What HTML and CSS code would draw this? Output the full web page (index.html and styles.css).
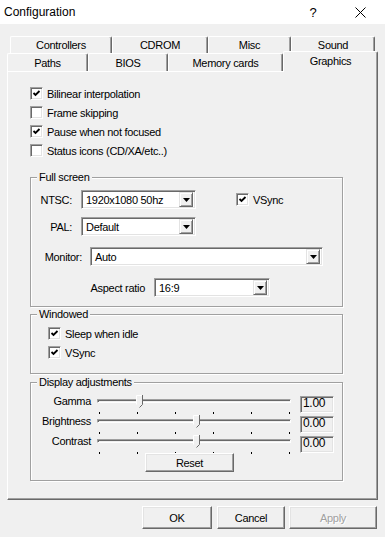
FILE: index.html
```html
<!DOCTYPE html>
<html lang="en">
<head>
    <meta charset="UTF-8">
    <meta name="viewport" content="width=device-width, initial-scale=1.0">
    <title>Configuration</title>
    <link rel="stylesheet" href="styles.css">
</head>
<body>
    <div class="titlebar">
        <span class="title">Configuration</span>
        <span class="help">?</span>
        <span class="close">
            <svg width="11" height="11" viewBox="0 0 11 11"><path d="M0.5 0.5L10.5 10.5M10.5 0.5L0.5 10.5" stroke="#000" stroke-width="1"/></svg>
        </span>
    </div>

    <div class="tabs">
        <div class="tab-row tab-row-back">
            <div class="tab tab-controllers">Controllers</div>
            <div class="tab tab-cdrom">CDROM</div>
            <div class="tab tab-misc">Misc</div>
            <div class="tab tab-sound">Sound</div>
        </div>
        <div class="tab-row tab-row-front">
            <div class="tab tab-paths">Paths</div>
            <div class="tab tab-bios">BIOS</div>
            <div class="tab tab-memcards">Memory cards</div>
            <div class="tab tab-graphics selected">Graphics</div>
        </div>
    </div>

    <div class="panel">
        <div class="checks">
            <label class="check"><span class="box"><svg width="9" height="9" viewBox="0 0 9 9"><polyline points="1.5,4 3.5,6 7.5,2" fill="none" stroke="#000" stroke-width="1.8"/></svg></span>Bilinear interpolation</label>
            <label class="check"><span class="box"></span>Frame skipping</label>
            <label class="check"><span class="box"><svg width="9" height="9" viewBox="0 0 9 9"><polyline points="1.5,4 3.5,6 7.5,2" fill="none" stroke="#000" stroke-width="1.8"/></svg></span>Pause when not focused</label>
            <label class="check"><span class="box"></span>Status icons (CD/XA/etc..)</label>
        </div>

        <div class="group group-fullscreen">
            <span class="group-title">Full screen</span>
            <div class="fs-row">
                <span class="fs-label label-short">NTSC:</span>
                <div class="combo combo-mode">
                    <span class="combo-text">1920x1080 50hz</span>
                    <span class="combo-btn"><svg width="7" height="4" viewBox="0 0 7 4"><path d="M0 0H7L3.5 4Z" fill="#000"/></svg></span>
                </div>
                <label class="check check-vsync"><span class="box"><svg width="9" height="9" viewBox="0 0 9 9"><polyline points="1.5,4 3.5,6 7.5,2" fill="none" stroke="#000" stroke-width="1.8"/></svg></span>VSync</label>
            </div>
            <div class="fs-row row-pal">
                <span class="fs-label label-short">PAL:</span>
                <div class="combo combo-mode">
                    <span class="combo-text">Default</span>
                    <span class="combo-btn"><svg width="7" height="4" viewBox="0 0 7 4"><path d="M0 0H7L3.5 4Z" fill="#000"/></svg></span>
                </div>
            </div>
            <div class="fs-row row-monitor">
                <span class="fs-label label-monitor">Monitor:</span>
                <div class="combo combo-monitor">
                    <span class="combo-text">Auto</span>
                    <span class="combo-btn"><svg width="7" height="4" viewBox="0 0 7 4"><path d="M0 0H7L3.5 4Z" fill="#000"/></svg></span>
                </div>
            </div>
            <div class="fs-row row-aspect">
                <span class="fs-label label-aspect">Aspect ratio</span>
                <div class="combo combo-aspect">
                    <span class="combo-text">16:9</span>
                    <span class="combo-btn"><svg width="7" height="4" viewBox="0 0 7 4"><path d="M0 0H7L3.5 4Z" fill="#000"/></svg></span>
                </div>
            </div>
        </div>

        <div class="group group-windowed">
            <span class="group-title">Windowed</span>
            <label class="check"><span class="box"><svg width="9" height="9" viewBox="0 0 9 9"><polyline points="1.5,4 3.5,6 7.5,2" fill="none" stroke="#000" stroke-width="1.8"/></svg></span>Sleep when idle</label>
            <label class="check"><span class="box"><svg width="9" height="9" viewBox="0 0 9 9"><polyline points="1.5,4 3.5,6 7.5,2" fill="none" stroke="#000" stroke-width="1.8"/></svg></span>VSync</label>
        </div>

        <div class="group group-display">
            <span class="group-title">Display adjustments</span>

            <div class="slider-row">
                <span class="slider-label">Gamma</span>
                <div class="slider">
                    <div class="track"></div>
                    <div class="rail">
                        <svg class="thumb" style="left: 21%" width="7" height="13" viewBox="0 0 7 13"><path d="M0.5 0.5H6.5V9.5L3.5 12.5L0.5 9.5Z" fill="#f0f0f0"/><path d="M0.5 9.5V0.5H6" fill="none" stroke="#fff"/><path d="M6.5 0V9.5L3.5 12.5" fill="none" stroke="#696969"/></svg>
                    </div>
                    <div class="ticks"><i></i><i></i><i></i><i></i><i></i><i></i></div>
                </div>
                <span class="value">1.00</span>
            </div>

            <div class="slider-row">
                <span class="slider-label">Brightness</span>
                <div class="slider">
                    <div class="track"></div>
                    <div class="rail">
                        <svg class="thumb" style="left: 51%" width="7" height="13" viewBox="0 0 7 13"><path d="M0.5 0.5H6.5V9.5L3.5 12.5L0.5 9.5Z" fill="#f0f0f0"/><path d="M0.5 9.5V0.5H6" fill="none" stroke="#fff"/><path d="M6.5 0V9.5L3.5 12.5" fill="none" stroke="#696969"/></svg>
                    </div>
                    <div class="ticks"><i></i><i></i><i></i><i></i><i></i><i></i></div>
                </div>
                <span class="value">0.00</span>
            </div>

            <div class="slider-row">
                <span class="slider-label">Contrast</span>
                <div class="slider">
                    <div class="track"></div>
                    <div class="rail">
                        <svg class="thumb" style="left: 51%" width="7" height="13" viewBox="0 0 7 13"><path d="M0.5 0.5H6.5V9.5L3.5 12.5L0.5 9.5Z" fill="#f0f0f0"/><path d="M0.5 9.5V0.5H6" fill="none" stroke="#fff"/><path d="M6.5 0V9.5L3.5 12.5" fill="none" stroke="#696969"/></svg>
                    </div>
                    <div class="ticks"><i></i><i></i><i></i><i></i><i></i><i></i></div>
                </div>
                <span class="value">0.00</span>
            </div>

            <div class="reset-row">
                <button class="btn btn-reset">Reset</button>
            </div>
        </div>
    </div>

    <div class="buttons">
        <button class="btn btn-ok">OK</button>
        <button class="btn btn-cancel">Cancel</button>
        <button class="btn btn-apply" disabled>Apply</button>
    </div>
</body>
</html>
```

FILE: styles.css
```css
* {
    margin: 0;
    padding: 0;
    box-sizing: border-box;
}

body {
    width: 385px;
    height: 537px;
    overflow: hidden;
    background: #f0f0f0;
    color: #000;
    font-family: 'Liberation Sans', Arial, sans-serif;
    font-size: 11px;
    letter-spacing: -0.3px;
}

/* title bar */
.titlebar {
    height: 24px;
    background: #fff;
    display: flex;
    align-items: center;
    padding: 0 15px 0 4px;
}

.title {
    flex: 1;
    font-size: 12px;
    letter-spacing: 0;
}

.help {
    width: 20px;
    text-align: center;
    font-size: 13px;
    letter-spacing: 0;
}

.close {
    width: 20px;
    margin-left: 27px;
    display: flex;
    justify-content: center;
}

/* tabs */
.tabs {
    margin-top: 12px;
}

.tab-row {
    display: flex;
    align-items: flex-end;
}

.tab-row-back {
    height: 17px;
    margin-left: 10px;
}

.tab-row-front {
    height: 18px;
    margin-left: 7px;
}

.tab {
    height: 100%;
    display: flex;
    align-items: center;
    justify-content: center;
    background: #f0f0f0;
    border-top: 1px solid #fff;
    border-left: 1px solid #fff;
    border-right: 1px solid #696969;
    box-shadow: inset -1px 0 #a0a0a0;
    border-radius: 2px 2px 0 0;
}

.tab-controllers { width: 102px; }
.tab-cdrom { width: 96px; }
.tab-misc { width: 83px; }
.tab-sound { width: 84px; }
.tab-paths { width: 81px; }
.tab-bios { width: 80px; }
.tab-memcards { width: 115px; }

.tab-graphics {
    width: 95px;
    padding-bottom: 3px;
}

.tab.selected {
    height: 21px;
    margin-bottom: -1px;
    position: relative;
    z-index: 1;
}

/* main panel */
.panel {
    margin-left: 7px;
    width: 371px;
    height: 429px;
    border: 1px solid;
    border-color: #fff #696969 #696969 #fff;
    box-shadow: inset -1px -1px #a0a0a0;
    padding: 12px 0 0 22px;
}

.checks {
    margin-left: 0;
}

.check {
    display: flex;
    align-items: center;
    height: 19px;
    gap: 4px;
    white-space: nowrap;
}

.box {
    width: 13px;
    height: 13px;
    flex: none;
    display: flex;
    align-items: center;
    justify-content: center;
    background: #fff;
    border: 1px solid;
    border-color: #a0a0a0 #fff #fff #a0a0a0;
    box-shadow: inset 1px 1px #696969, inset -1px -1px #e3e3e3;
}

/* group boxes */
.group {
    position: relative;
    width: 313px;
    border: 1px solid #a0a0a0;
    box-shadow: 1px 1px 0 #fff, inset 1px 1px 0 #fff;
}

.group-title {
    position: absolute;
    top: -7px;
    left: 6px;
    padding: 0 2px;
    line-height: 12px;
    background: #f0f0f0;
}

.group-fullscreen {
    margin-top: 17px;
    height: 130px;
    padding-top: 12px;
}

.fs-row {
    display: flex;
    align-items: center;
    height: 19px;
}

.row-pal { margin-top: 8px; }
.row-monitor { margin-top: 11px; }
.row-aspect { margin-top: 12px; }

.fs-label {
    text-align: right;
    flex: none;
}

.label-short { width: 41px; margin-right: 9px; }
.label-monitor { width: 51px; margin-right: 8px; }
.label-aspect { width: 114px; margin-right: 9px; }

.check-vsync {
    margin-left: 40px;
}

.combo {
    height: 19px;
    display: flex;
    align-items: center;
    background: #fff;
    border: 1px solid;
    border-color: #a0a0a0 #fff #fff #a0a0a0;
    box-shadow: inset 1px 1px #696969, inset -1px -1px #e3e3e3;
    padding: 2px 2px 2px 4px;
}

.combo-mode { width: 115px; }
.combo-monitor { width: 233px; }
.combo-aspect { width: 116px; }

.combo-text {
    flex: 1;
}

.combo-btn {
    width: 14px;
    height: 15px;
    display: flex;
    align-items: center;
    justify-content: center;
    background: #f0f0f0;
    border: 1px solid;
    border-color: #e3e3e3 #696969 #696969 #e3e3e3;
    box-shadow: inset 1px 1px #fff, inset -1px -1px #a0a0a0;
}

.group-windowed {
    margin-top: 7px;
    height: 60px;
    padding: 9px 0 0 17px;
}

.group-display {
    margin-top: 8px;
    height: 99px;
    padding-top: 12px;
}

/* sliders */
.slider-row {
    display: flex;
    height: 20px;
}

.slider-label {
    width: 60px;
    text-align: right;
    line-height: 12px;
    flex: none;
}

.slider {
    position: relative;
    width: 200px;
    margin-left: 3px;
    height: 20px;
}

.track {
    margin: 4px 3px 0;
    height: 4px;
    border: 1px solid;
    border-color: #a0a0a0 #fff #fff #a0a0a0;
    box-shadow: inset 1px 1px #696969;
}

.rail {
    position: absolute;
    top: 0;
    left: 5px;
    width: 191px;
    height: 13px;
}

.thumb {
    position: absolute;
    top: 0;
    margin-left: -3px;
}

.ticks {
    display: flex;
    justify-content: space-between;
    margin: 9px 4px 0 5px;
    height: 2px;
}

.ticks i {
    width: 1px;
    height: 2px;
    background: #000;
}

.value {
    width: 34px;
    height: 17px;
    margin-left: 6px;
    margin-top: 1px;
    line-height: 13px;
    font-size: 12px;
    padding-left: 2px;
    border: 1px solid;
    border-color: #a0a0a0 #fff #fff #a0a0a0;
    box-shadow: inset 1px 1px #696969, inset -1px -1px #e3e3e3;
}

.reset-row {
    margin-top: -2px;
    padding-left: 114px;
}

/* buttons */
.btn {
    font: inherit;
    letter-spacing: inherit;
    color: #000;
    background: #f0f0f0;
    border: 1px solid;
    border-color: #fff #696969 #696969 #fff;
    box-shadow: inset -1px -1px #a0a0a0, inset 1px 1px #e3e3e3;
}

.btn-reset {
    position: relative;
    width: 89px;
    height: 19px;
}

.buttons {
    display: flex;
    justify-content: flex-end;
    padding-right: 8px;
    margin-top: 6px;
}

.btn-ok { width: 70px; height: 23px; }
.btn-cancel { width: 68px; height: 23px; margin-left: 5px; }
.btn-apply { width: 88px; height: 23px; margin-left: 4px; }

.btn:disabled {
    color: #a0a0a0;
    text-shadow: 1px 1px #fff;
}
```
